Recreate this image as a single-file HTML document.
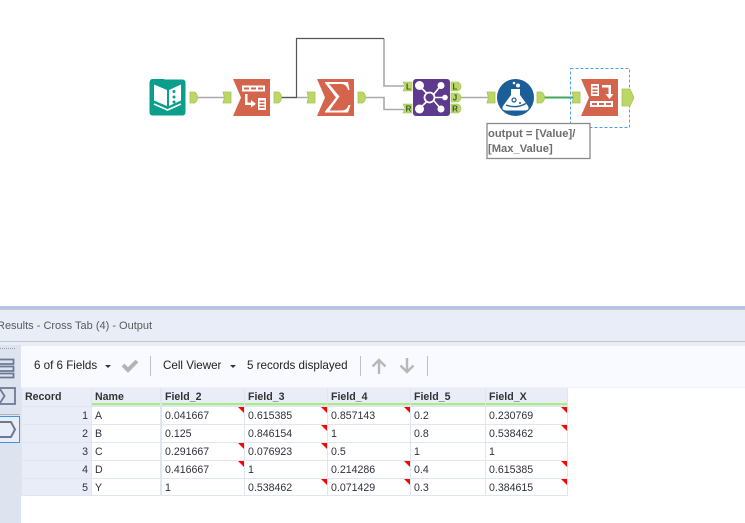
<!DOCTYPE html>
<html>
<head>
<meta charset="utf-8">
<style>
html,body{margin:0;padding:0;background:#fff;}
#p{position:relative;width:745px;height:523px;overflow:hidden;background:#fff;font-family:"Liberation Sans",sans-serif;}
.a{position:absolute;}
.t{position:absolute;white-space:nowrap;}
.c{position:absolute;background:#fff;font-size:10.6px;color:#30303f;line-height:19px;box-sizing:border-box;padding-left:3px;}
.h{position:absolute;background:#e9edf8;font-size:10.6px;font-weight:bold;color:#333;line-height:18px;box-sizing:border-box;padding-left:3px;height:15px;}
.g{position:absolute;background:#a4f07e;height:2px;}
.r{position:absolute;background:#e9edf8;font-size:10.6px;color:#30303f;line-height:18px;text-align:right;box-sizing:border-box;padding-right:3px;}
.m:after{content:"";position:absolute;right:0;top:0;border-top:6px solid #f00;border-left:6px solid transparent;}
</style>
</head>
<body>
<div id="p">
<svg class="a" style="left:0;top:0" width="745" height="170" viewBox="0 0 745 170">
<g fill="none" stroke="#a9a9a9" stroke-width="1.6">
<path d="M197 97.5H224"/>
<path d="M281 97.5H308"/>
<path d="M365 97.5H384V109.5H404"/>
<path d="M384 38.5V86H404"/>
<path d="M461 97.5H488"/>
</g>
<path d="M281 97.5H297M296.5 97.5V38.5H384" fill="none" stroke="#555" stroke-width="1.2"/>
<path d="M544 97.5H574" stroke="#3fa85a" stroke-width="2"/>

<defs>
<path id="o" d="M0 0H4.5Q7.5 2 7.5 5.5T4.5 11H0Z" fill="#bcd766" stroke="#a6c455" stroke-width=".8"/>
<path id="i" d="M0 0H8V11H0L1.5 5.5Z" fill="#bcd766" stroke="#a6c455" stroke-width=".8"/>
<path id="il" d="M0 0H9V9H0L2 4.5Z" fill="#bcd766" stroke="#a6c455" stroke-width=".6"/>
<path id="ol" d="M0 0H7Q10 1.5 10 4.5T7 9H0Z" fill="#bcd766" stroke="#a6c455" stroke-width=".6"/>
</defs>

<!-- book tool -->
<rect x="149.5" y="79.5" width="36" height="36" rx="3" fill="#0a9e8b"/>
<path d="M150 81Q150 79 153 79H164L166 81Z" fill="#0a9e8b"/>
<path d="M154 84.5L167 90V106L154 100.5Z" fill="#fff"/>
<path d="M169 90L181 84.5V100.5L169 106Z" fill="#fff"/>
<path d="M154 104L167.5 110L181 104" fill="none" stroke="#fff" stroke-width="1.6"/>
<g fill="#0a9e8b"><circle cx="174" cy="91.5" r="1.5"/><circle cx="174" cy="97" r="1.5"/><circle cx="174" cy="102" r="1.5"/></g>
<use href="#o" x="190" y="92"/>
<use href="#i" x="223" y="92"/>

<!-- tool 2 -->
<path d="M233 79H270V116H233L241 97.5Z" fill="#d4654c"/>
<g fill="#fff">
<path d="M242 85.5H265V91.5H242ZM244 87.5V89.5H249V87.5ZM251 87.5V89.5H256V87.5ZM258 87.5V89.5H263V87.5Z" fill-rule="evenodd"/>
<path d="M245 94H247.5V102.5H251V100L256 103.8L251 107.6V105H245Z"/>
<path d="M258 98H266V110H258ZM259.5 100.5V102H264.5V100.5ZM259.5 103.5V105H264.5V103.5ZM259.5 106.5V108H264.5V106.5Z" fill-rule="evenodd"/>
</g>
<use href="#o" x="274" y="92"/>
<use href="#i" x="307" y="92"/>

<!-- sum tool -->
<path d="M317 79H354V116H317L325 97.5Z" fill="#d4654c"/>
<path d="M325 82H348L349.5 90H348Q346.500 84 341 84H329L339.500 96.500L329.500 110.500H342Q347 110.500 348.500 105H350.500L348 112.500H325V111.500L336 97.500L325 83Z" fill="#fff"/>
<use href="#o" x="358" y="92"/>

<!-- join -->
<use href="#il" x="403" y="82"/>
<use href="#il" x="403" y="104"/>
<rect x="413" y="79" width="37" height="37" rx="3" fill="#5d3a8e"/>
<g stroke="#fff" stroke-width="1.6" fill="none">
<path d="M431 97.5L419 85.5M431 97.5L441 85.5M431 97.5H446M431 97.5L419 109M431 97.5L441 109"/>
</g>
<circle cx="429.500" cy="97.500" r="5" fill="#5d3a8e" stroke="#fff" stroke-width="1.800"/>
<g fill="#fff"><circle cx="419.500" cy="85.500" r="4.500"/><circle cx="441" cy="85.500" r="3.500"/><circle cx="445" cy="97.500" r="2.800"/><circle cx="419.500" cy="109" r="4.500"/><circle cx="441" cy="109" r="3.500"/></g>
<use href="#ol" x="451" y="82"/>
<use href="#ol" x="451" y="93"/>
<use href="#ol" x="451" y="104"/>
<g font-family="Liberation Sans" font-size="8" font-weight="bold" fill="#2c5a35" text-anchor="middle">
<text x="408.500" y="89.500">L</text><text x="408.500" y="111.500">R</text>
<text x="455" y="89.500">L</text><text x="455" y="100.500">J</text><text x="455" y="111.500">R</text>
</g>

<!-- formula -->
<use href="#i" x="487" y="92"/>
<circle cx="515.500" cy="97.500" r="18.500" fill="#1b5e98"/>
<circle cx="514" cy="83" r="1.300" fill="#fff"/><circle cx="518" cy="85.500" r="2" fill="#fff"/>
<path d="M511 89H520V95L528 106Q530 110 525 110.500H506Q501 110 503 106L511 95Z" fill="#fff"/>
<path d="M506 105Q516 109 526 103.500" fill="none" stroke="#1b5e98" stroke-width="1.400"/>
<circle cx="514" cy="100" r="2" fill="none" stroke="#1b5e98" stroke-width="1.200"/>
<circle cx="520" cy="103" r="1" fill="#1b5e98"/>
<use href="#o" x="537" y="92"/>
<use href="#i" x="572" y="92"/>

<!-- cross tab -->
<rect x="570.500" y="68.500" width="59" height="59" fill="none" stroke="#4a9fee" stroke-width="1" stroke-dasharray="3 2"/>
<path d="M581 79H618V116H581L589 97.500Z" fill="#d4654c"/>
<g fill="#fff">
<path d="M591 84H599V96H591ZM592.500 86V87.500H597.500V86ZM592.500 89.500V91H597.500V89.500ZM592.500 92.500V94H597.500V92.500Z" fill-rule="evenodd"/>
<path d="M602 85H611V94H613.500L609.500 99L605.500 94H608.500V87.500H602Z"/>
<path d="M590 101H613V107H590ZM592 103V105H597V103ZM599 103V105H604V103ZM606 103V105H611V103Z" fill-rule="evenodd"/>
</g>
<path d="M622 89H630L634 97.500L630 106H622Z" fill="#bcd766" stroke="#a6c455" stroke-width=".8"/>

<!-- tooltip -->
<rect x="487" y="123.500" width="103" height="35" fill="#fff" stroke="#8a8a8a" stroke-width="1.300"/>
<text x="488" y="137" font-family="Liberation Sans" font-size="11.200" font-weight="bold" fill="#6e6e6e">output = [Value]/</text>
<text x="488" y="152" font-family="Liberation Sans" font-size="11.200" font-weight="bold" fill="#6e6e6e">[Max_Value]</text>
</svg>

<!-- panel -->
<div class="a" style="left:0;top:306px;width:745px;height:3px;background:#b4c3e6"></div>
<div class="a" style="left:0;top:309px;width:745px;height:1px;background:#c8c8c8"></div>
<div class="a" style="left:0;top:310px;width:745px;height:31px;background:#e9edf8"></div>
<div class="a" style="left:0;top:341px;width:745px;height:1px;background:#c6c6c6"></div>
<div class="a" style="left:0;top:342px;width:745px;height:4px;background:#e9edf8"></div>
<div class="t" style="left:-3px;top:319px;font-size:11px;color:#5a5a5a;line-height:15px">Results - Cross Tab (4) - Output</div>

<!-- toolbar -->
<div class="a" style="left:21px;top:346px;width:724px;height:41px;background:#f8faff"></div>
<div class="a" style="left:21px;top:387px;width:724px;height:1px;background:#eef1f8"></div>
<div class="t" style="left:34px;top:358px;font-size:11.600px;color:#222;line-height:16px">6 of 6 Fields</div>
<div class="a" style="left:105px;top:365px;border-top:3px solid #333;border-left:3px solid transparent;border-right:3px solid transparent"></div>
<svg class="a" style="left:120px;top:357px" width="20" height="18"><path d="M3 8L8 13L17 4" fill="none" stroke="#b4b4b4" stroke-width="4"/></svg>
<div class="a" style="left:150px;top:356px;width:1px;height:20px;background:#c0c0c0"></div>
<div class="t" style="left:163px;top:358px;font-size:11.600px;color:#222;line-height:16px">Cell Viewer</div>
<div class="a" style="left:230px;top:365px;border-top:3px solid #333;border-left:3px solid transparent;border-right:3px solid transparent"></div>
<div class="t" style="left:247px;top:358px;font-size:11.600px;color:#222;line-height:16px">5 records displayed</div>
<div class="a" style="left:360px;top:356px;width:1px;height:20px;background:#c0c0c0"></div>
<svg class="a" style="left:370px;top:357px" width="50" height="18" fill="none" stroke="#b8b8b8" stroke-width="2.400"><path d="M9 17V3M2.500 9.500L9 3L15.500 9.500M37 1V15M30.500 8.500L37 15L43.500 8.500"/></svg>
<div class="a" style="left:427px;top:356px;width:1px;height:20px;background:#c0c0c0"></div>

<!-- sidebar -->
<div class="a" style="left:0;top:345px;width:21px;height:178px;background:#dde3ef"></div>
<div class="a" style="left:0;top:348px;width:15px;height:1.500px;border-top:1px dotted #9aa0aa"></div>
<svg class="a" style="left:0;top:355px" width="21" height="92" fill="none">
<path d="M0 4.500H13.500V9H0M0 11.500H13.500V16H0M0 18.500H13.500V22.500H0" stroke="#6b7a94" stroke-width="1.800"/>
<path d="M0 33H15V49H0" stroke="#6b7a94" stroke-width="1.800"/>
<path d="M0 34L4.500 41L0 48" stroke="#6b7a94" stroke-width="1.800"/>
<path d="M0 59.500H19.500" stroke="#aeb4be" stroke-width="1"/>
<rect x="-1" y="61.500" width="20.500" height="26" fill="#e9edf8" stroke="#3d94e6" stroke-width="1"/>
<path d="M0 67H11L15 74.500L11 82H0" stroke="#6b7a94" stroke-width="2"/>
</svg>

<!-- table grid -->
<div class="a" style="left:21px;top:388px;width:547px;height:108px;background:#dfe5f1"></div>

<div class="h" style="left:22px;top:388px;width:69px;height:18px">Record</div>
<div class="h" style="left:92px;top:388px;width:68px">Name</div><div class="g" style="left:92px;top:403px;width:68px"></div>
<div class="h" style="left:162px;top:388px;width:82px">Field_2</div><div class="g" style="left:162px;top:403px;width:82px"></div>
<div class="h" style="left:245px;top:388px;width:82px">Field_3</div><div class="g" style="left:245px;top:403px;width:82px"></div>
<div class="h" style="left:328px;top:388px;width:82px">Field_4</div><div class="g" style="left:328px;top:403px;width:82px"></div>
<div class="h" style="left:411px;top:388px;width:74px">Field_5</div><div class="g" style="left:411px;top:403px;width:74px"></div>
<div class="h" style="left:486px;top:388px;width:81px">Field_X</div><div class="g" style="left:486px;top:403px;width:81px"></div>

<div class="r" style="left:22px;top:407px;width:69px;height:17px">1</div>
<div class="c" style="left:92px;top:407px;width:68px;height:17px">A</div>
<div class="c m" style="left:162px;top:407px;width:82px;height:17px">0.041667</div>
<div class="c m" style="left:245px;top:407px;width:82px;height:17px">0.615385</div>
<div class="c m" style="left:328px;top:407px;width:82px;height:17px">0.857143</div>
<div class="c" style="left:411px;top:407px;width:74px;height:17px">0.2</div>
<div class="c m" style="left:486px;top:407px;width:81px;height:17px">0.230769</div>

<div class="r" style="left:22px;top:425px;width:69px;height:17px">2</div>
<div class="c" style="left:92px;top:425px;width:68px;height:17px">B</div>
<div class="c" style="left:162px;top:425px;width:82px;height:17px">0.125</div>
<div class="c m" style="left:245px;top:425px;width:82px;height:17px">0.846154</div>
<div class="c" style="left:328px;top:425px;width:82px;height:17px">1</div>
<div class="c" style="left:411px;top:425px;width:74px;height:17px">0.8</div>
<div class="c m" style="left:486px;top:425px;width:81px;height:17px">0.538462</div>

<div class="r" style="left:22px;top:443px;width:69px;height:17px">3</div>
<div class="c" style="left:92px;top:443px;width:68px;height:17px">C</div>
<div class="c m" style="left:162px;top:443px;width:82px;height:17px">0.291667</div>
<div class="c m" style="left:245px;top:443px;width:82px;height:17px">0.076923</div>
<div class="c" style="left:328px;top:443px;width:82px;height:17px">0.5</div>
<div class="c" style="left:411px;top:443px;width:74px;height:17px">1</div>
<div class="c" style="left:486px;top:443px;width:81px;height:17px">1</div>

<div class="r" style="left:22px;top:461px;width:69px;height:17px">4</div>
<div class="c" style="left:92px;top:461px;width:68px;height:17px">D</div>
<div class="c m" style="left:162px;top:461px;width:82px;height:17px">0.416667</div>
<div class="c" style="left:245px;top:461px;width:82px;height:17px">1</div>
<div class="c m" style="left:328px;top:461px;width:82px;height:17px">0.214286</div>
<div class="c" style="left:411px;top:461px;width:74px;height:17px">0.4</div>
<div class="c m" style="left:486px;top:461px;width:81px;height:17px">0.615385</div>

<div class="r" style="left:22px;top:479px;width:69px;height:16px">5</div>
<div class="c" style="left:92px;top:479px;width:68px;height:16px">Y</div>
<div class="c" style="left:162px;top:479px;width:82px;height:16px">1</div>
<div class="c m" style="left:245px;top:479px;width:82px;height:16px">0.538462</div>
<div class="c m" style="left:328px;top:479px;width:82px;height:16px">0.071429</div>
<div class="c" style="left:411px;top:479px;width:74px;height:16px">0.3</div>
<div class="c m" style="left:486px;top:479px;width:81px;height:16px">0.384615</div>
</div>
</body>
</html>
